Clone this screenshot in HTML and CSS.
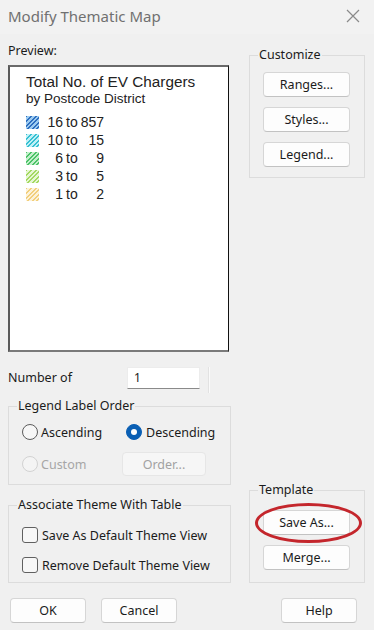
FILE: index.html
```html
<!DOCTYPE html>
<html>
<head>
<meta charset="utf-8">
<link rel="stylesheet" href="styles.css">
</head>
<body>
<div class="dialog">
  <div class="titlebar">
    <span class="title">Modify Thematic Map</span>
    <svg class="close" width="14" height="14" viewBox="0 0 14 14"><path d="M1 1L13 13M13 1L1 13" stroke="#8a8a8a" stroke-width="1.2" fill="none"/></svg>
  </div>
  <div class="content">
    <div class="left">
      <div class="label preview-label">Preview:</div>
      <div class="preview">
        <div class="lg-title">Total No. of EV Chargers</div>
        <div class="lg-sub">by Postcode District</div>
        <div class="lg-rows">
          <div class="lg-row"><span class="sw sw1"></span><span class="n1">16</span><span class="to">to</span><span class="n2">857</span></div>
          <div class="lg-row"><span class="sw sw2"></span><span class="n1">10</span><span class="to">to</span><span class="n2">15</span></div>
          <div class="lg-row"><span class="sw sw3"></span><span class="n1">6</span><span class="to">to</span><span class="n2">9</span></div>
          <div class="lg-row"><span class="sw sw4"></span><span class="n1">3</span><span class="to">to</span><span class="n2">5</span></div>
          <div class="lg-row"><span class="sw sw5"></span><span class="n1">1</span><span class="to">to</span><span class="n2">2</span></div>
        </div>
      </div>
      <div class="num-row">
        <span class="label num-label">Number of</span>
        <div class="input">1</div>
        <span class="spin-edge"></span>
      </div>
      <div class="group order-group">
        <span class="group-title">Legend Label Order</span>
        <div class="radio-row">
          <label class="radio"><span class="rb"></span>Ascending</label>
          <label class="radio desc"><span class="rb on"></span>Descending</label>
        </div>
        <div class="radio-row row2">
          <label class="radio disabled"><span class="rb"></span>Custom</label>
          <button class="btn order-btn" disabled>Order...</button>
        </div>
      </div>
      <div class="group assoc-group">
        <span class="group-title">Associate Theme With Table</span>
        <label class="check"><span class="cb"></span>Save As Default Theme View</label>
        <label class="check"><span class="cb"></span>Remove Default Theme View</label>
      </div>
    </div>
    <div class="right">
      <div class="group customize-group">
        <span class="group-title">Customize</span>
        <button class="btn side-btn">Ranges...</button>
        <button class="btn side-btn">Styles...</button>
        <button class="btn side-btn">Legend...</button>
      </div>
      <div class="group template-group">
        <span class="group-title">Template</span>
        <button class="btn side-btn">Save As...</button>
        <button class="btn side-btn">Merge...</button>
        <span class="highlight"></span>
      </div>
    </div>
  </div>
  <div class="footer">
    <button class="btn foot-btn">OK</button>
    <button class="btn foot-btn">Cancel</button>
    <button class="btn foot-btn help">Help</button>
  </div>
</div>
</body>
</html>
```

FILE: styles.css
```css
* { box-sizing: border-box; }
html, body { margin: 0; padding: 0; }
body {
  width: 374px;
  height: 630px;
  background: #f0f0f0;
  font-family: "Noto Sans", "Open Sans", sans-serif;
  font-size: 12.5px;
  color: #1b1b1b;
  overflow: hidden;
}
.dialog { width: 374px; height: 630px; background: #f0f0f0; }

.titlebar {
  height: 34px;
  display: flex;
  align-items: center;
  justify-content: space-between;
  padding: 0 14px 2px 8px;
  background: #f2f2f2;
}
.title { font-size: 15px; color: #707070; }
.close { display: block; }

.content {
  display: grid;
  grid-template-columns: 223px 116px;
  column-gap: 18px;
  padding-left: 8px;
}
.left, .right { display: flex; flex-direction: column; }

.label { line-height: 16px; }
.preview-label { margin-top: 9px; }

.preview {
  margin-top: 6px;
  width: 221px;
  height: 287px;
  background: #fff;
  border-top: 2px solid #6a6a6a;
  border-left: 2px solid #5a5a5a;
  border-right: 1px solid #111;
  border-bottom: 2px solid #7a7a7a;
  padding: 6px 0 0 16px;
  font-family: "Liberation Sans", Arial, sans-serif;
  color: #222;
}
.lg-title { font-size: 15.3px; line-height: 18px; }
.lg-sub { font-size: 13.5px; line-height: 16px; margin-top: 0; }
.lg-rows { margin-top: 6px; }
.lg-row {
  display: grid;
  grid-template-columns: 13px 24px 15px 26px;
  align-items: center;
  height: 18px;
  font-size: 14px;
}
.n1 { text-align: right; }
.to { padding-left: 3px; }
.n2 { text-align: right; }
.sw { width: 13px; height: 13px; }
.sw1 { background: repeating-linear-gradient(135deg, #2f6fc0 0 1.4px, #9ccbf0 1.4px 3.2px); }
.sw2 { background: repeating-linear-gradient(135deg, #36c0d2 0 1.4px, #c0f0f6 1.4px 3.2px); }
.sw3 { background: repeating-linear-gradient(135deg, #4cc268 0 1.4px, #c4f0cc 1.4px 3.2px); }
.sw4 { background: repeating-linear-gradient(135deg, #a4d860 0 1.4px, #e6f7d2 1.4px 3.2px); }
.sw5 { background: repeating-linear-gradient(135deg, #f2cf7c 0 1.4px, #fcf2da 1.4px 3.2px); }

.num-row {
  margin-top: 15px;
  height: 22px;
  display: flex;
  align-items: center;
}
.num-label { width: 119px; }
.input {
  width: 73px;
  height: 22px;
  background: #fff;
  border: 1px solid #ececec;
  border-bottom: 1px solid #8a8a8a;
  padding-left: 6px;
  line-height: 20px;
  font-size: 12px;
}
.spin-edge {
  margin-left: 8px;
  width: 2px;
  height: 26px;
  border-left: 1px solid #e2e2e2;
  background: #fafafa;
  align-self: flex-start;
}

.group {
  position: relative;
  border: 1px solid #dcdcdc;
}
.group-title {
  position: absolute;
  top: -9px;
  left: 8px;
  padding: 0 1px;
  line-height: 16px;
  background: #f0f0f0;
}

.order-group { margin-top: 17px; height: 79px; padding: 17px 0 0 13px; }
.radio-row { display: flex; align-items: center; height: 16px; }
.row2 { margin-top: 16px; }
.radio { display: flex; align-items: center; width: 105px; }
.rb {
  width: 16px; height: 16px;
  border-radius: 50%;
  border: 1px solid #5c5c5c;
  background: #f7f7f7;
  margin-right: 3px;
  position: relative;
  flex: none;
}
.desc .rb { margin-right: 4px; }
.rb.on { background: #0a5fb4; border-color: #0a5fb4; }
.rb.on::after {
  content: "";
  position: absolute;
  left: 4px; top: 4px;
  width: 6px; height: 6px;
  border-radius: 50%;
  background: #fff;
}
.radio.disabled { color: #a6a6a6; }
.radio.disabled .rb { border-color: #d2d2d2; background: #f4f4f4; }

.btn {
  font-family: inherit;
  font-size: 12.5px;
  color: #1b1b1b;
  background: #fdfdfd;
  border: 1px solid #d6d6d6;
  border-bottom-color: #c2c2c2;
  border-radius: 4px;
  height: 25px;
  padding: 0;
}
.order-btn {
  width: 84px;
  height: 24px;
  margin-left: -5px;
  color: #a2a2a2;
  background: #f6f6f6;
  border-color: #e6e6e6;
}

.assoc-group { margin-top: 20px; height: 78px; padding: 21px 0 0 13px; }
.check { display: flex; align-items: center; height: 16px; }
.check + .check { margin-top: 14px; }
.cb {
  width: 16px; height: 16px;
  border: 1px solid #606060;
  border-radius: 3px;
  background: #f7f7f7;
  margin-right: 4px;
  flex: none;
}

.customize-group {
  margin-top: 21px;
  height: 123px;
  padding: 16px 0 0 13px;
  display: flex;
  flex-direction: column;
  gap: 10px;
}
.side-btn { width: 87px; }
.template-group {
  margin-top: auto;
  height: 93px;
  padding: 19px 0 0 13px;
  display: flex;
  flex-direction: column;
  gap: 10px;
}
.highlight {
  position: absolute;
  left: 5px;
  top: 12px;
  width: 107px;
  height: 40px;
  border: 3px solid #c4262c;
  border-radius: 50%;
}

.footer {
  display: flex;
  padding: 15px 0 0 10px;
  gap: 15px;
}
.foot-btn { width: 76px; }
.help { margin-left: 89px; }
```
